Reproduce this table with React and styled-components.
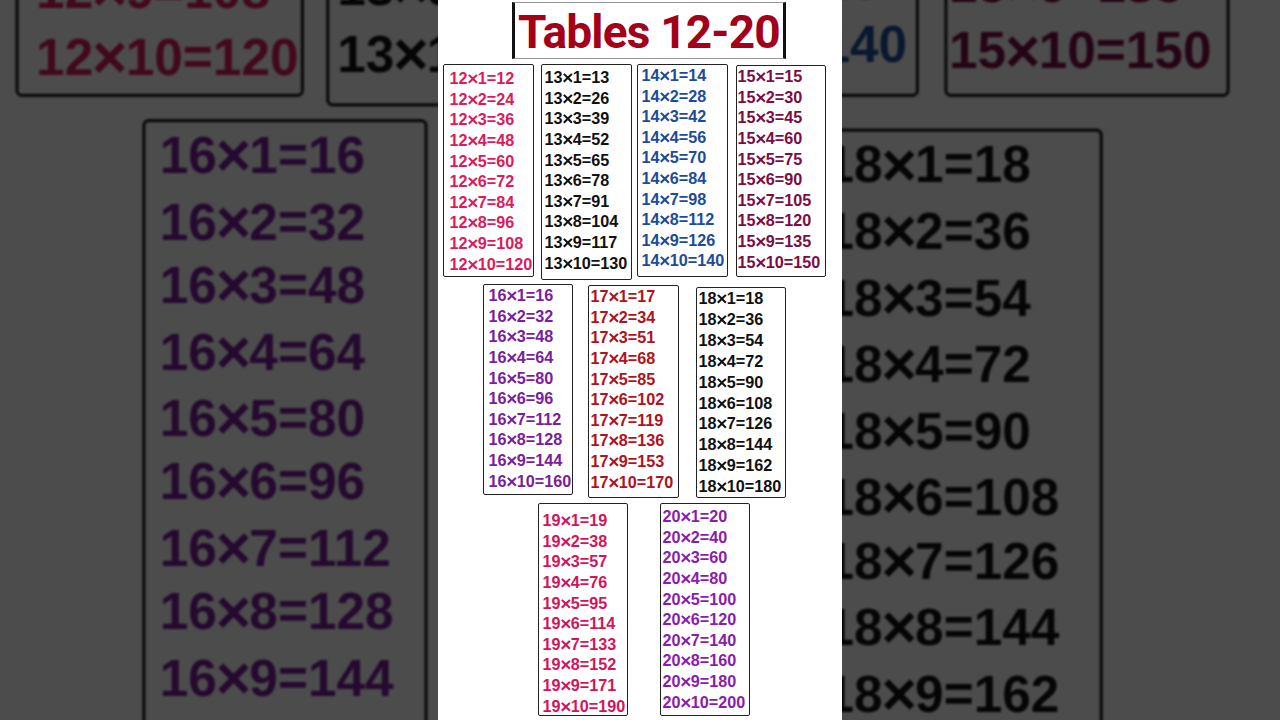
import React from "react";
import styled, { createGlobalStyle } from "styled-components";

const Global = createGlobalStyle`
  html, body { margin: 0; padding: 0; }
  body { width: 1280px; height: 720px; overflow: hidden; background: #4d4d4d; font-family: "Liberation Sans", Arial, sans-serif; }
`;

const Stage = styled.div`
  position: relative;
  width: 1280px;
  height: 720px;
  display: flex;
  justify-content: center;
  overflow: hidden;
  background: #4d4d4d;
`;

const Backdrop = styled.div`
  position: absolute;
  inset: 0;
  display: flex;
  justify-content: center;
  align-items: center;
  filter: brightness(0.3) blur(1.2px);
  pointer-events: none;
  & > * {
    flex: none;
    transform: scale(3.17);
    transform-origin: 50% 50%;
  }
`;

const Front = styled.div`
  position: relative;
  z-index: 1;
`;

const Sheet = styled.div`
  width: 404px;
  height: 720px;
  background: #ffffff;
  display: flex;
  flex-direction: column;
  padding-top: 2px;
  box-sizing: border-box;
`;

const Title = styled.h1`
  align-self: flex-start;
  margin: 0 0 0 74px;
  width: 274px;
  height: 57px;
  box-sizing: border-box;
  border-left: 3px solid #111;
  border-right: 3px solid #111;
  border-top: 1px solid #9a9a9a;
  border-bottom: 1px solid #9a9a9a;
  display: flex;
  align-items: center;
  justify-content: center;
  font-family: Roboto, "Noto Sans", sans-serif;
  font-weight: 700;
  font-size: 46px;
  letter-spacing: -0.8px;
  white-space: nowrap;
  line-height: 1;
  color: #a3001a;
  padding-top: 2px;
`;

const Row = styled.div`
  display: flex;
  align-items: flex-start;
  margin-top: ${(p) => p.$mt}px;
`;

const Box = styled.div`
  flex: none;
  box-sizing: border-box;
  width: ${(p) => p.$w}px;
  height: ${(p) => p.$h}px;
  margin-left: ${(p) => p.$ml}px;
  margin-top: ${(p) => p.$dy || 0}px;
  padding-left: ${(p) => p.$pl}px;
  padding-top: ${(p) => p.$pt}px;
  border: 1.5px solid #222;
  border-radius: 2px;
  color: ${(p) => p.$color};
  font-family: "Liberation Sans", Arial, sans-serif;
  font-weight: 700;
  font-size: 16.2px;
  line-height: ${(p) => p.$lh || 20.6}px;
  white-space: nowrap;
  overflow: visible;
`;

const Line = styled.div``;

const Times = styled.span`
  display: inline-block;
  margin: 0 0.4px;
  transform: scale(1.18);
`;

const tables = [
  [
    { n: 12, w: 91, h: 213, ml: 5, dy: 0, pl: 5.5, pt: 3.2, color: "#dc1a5c" },
    { n: 13, w: 91, h: 216, ml: 7, dy: 0, pl: 2.5, pt: 2.2, color: "#111111" },
    { n: 14, w: 91, h: 213, ml: 5, dy: 0, pl: 3.5, pt: 0, color: "#1d4b9b" },
    { n: 15, w: 90, h: 212, ml: 8, dy: 1, pl: 0.5, pt: 0.2, color: "#7d0c45" },
  ],
  [
    { n: 16, w: 90, h: 211, ml: 45, dy: 0, pl: 4.5, pt: 0.2, color: "#7a1d9e" },
    { n: 17, w: 91, h: 213, ml: 15, dy: 1, pl: 1.5, pt: 0.2, color: "#b0121e" },
    { n: 18, w: 90, h: 211, ml: 17, dy: 3, pl: 1.5, pt: 0, lh: 20.9, color: "#111111" },
  ],
  [
    { n: 19, w: 90, h: 213, ml: 100, dy: 0, pl: 3.5, pt: 6.2, color: "#d4145a" },
    { n: 20, w: 90, h: 213, ml: 32, dy: 0, pl: 1.5, pt: 2.2, color: "#8a1cb0" },
  ],
];

const rowGaps = [5, 4, 5];

function Table({ t }) {
  return (
    <Box $w={t.w} $h={t.h} $ml={t.ml} $dy={t.dy} $pl={t.pl} $pt={t.pt} $lh={t.lh} $color={t.color}>
      {Array.from({ length: 10 }, (_, i) => (
        <Line key={i}>
          {t.n}
          <Times>×</Times>
          {i + 1}={t.n * (i + 1)}
        </Line>
      ))}
    </Box>
  );
}

function Content() {
  return (
    <Sheet>
      <Title>Tables 12-20</Title>
      {tables.map((row, ri) => (
        <Row key={ri} $mt={rowGaps[ri]}>
          {row.map((t) => (
            <Table key={t.n} t={t} />
          ))}
        </Row>
      ))}
    </Sheet>
  );
}

export default function App() {
  return (
    <>
      <Global />
      <Stage>
        <Backdrop aria-hidden="true">
          <Content />
        </Backdrop>
        <Front>
          <Content />
        </Front>
      </Stage>
    </>
  );
}
